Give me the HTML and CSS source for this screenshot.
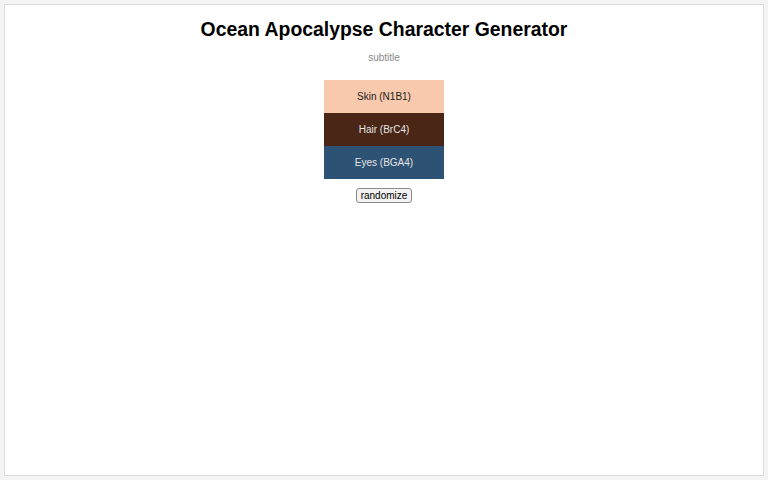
FILE: index.html
```html
<!DOCTYPE html>
<html>

<head>
  <meta charset="UTF-8">
  <title>Ocean Apocalypse Character Generator</title>
  <link rel="stylesheet" href="styles.css">
</head>

<body>

  <div id="page">
    <h1 id="title">Ocean Apocalypse Character Generator</h1>
    <div id="subtitle">subtitle</div>

    <div id="swatches">
      <div class="swatch skin">Skin (N1B1)</div>
      <div class="swatch hair">Hair (BrC4)</div>
      <div class="swatch eyes">Eyes (BGA4)</div>
    </div>

    <button id="randomize-btn">randomize</button>
  </div>

</body>

</html>
```

FILE: styles.css
```css
html, body {
  height: 100%;
}

body {
  margin: 0;
  padding: 4px;
  box-sizing: border-box;
  background-color: #f4f4f4;
  font-family: 'Liberation Sans', Arial, sans-serif;
}

#page {
  height: 100%;
  box-sizing: border-box;
  background-color: #fff;
  border: 1px solid #dcdcdc;
  text-align: center;
  padding-top: 12px;
}

#title {
  margin: 0;
  font-size: 19.4px;
  font-weight: bold;
  color: #000;
  line-height: 24px;
}

#subtitle {
  margin-top: 11px;
  font-size: 10px;
  color: #888;
  line-height: 12px;
}

#swatches {
  width: 120px;
  margin: 16px auto 0 auto;
}

.swatch {
  height: 33px;
  line-height: 33px;
  font-size: 10px;
}

.swatch.skin {
  background-color: #f8c9ac;
  color: #222;
}

.swatch.hair {
  background-color: #4a2616;
  color: #e4e4e4;
}

.swatch.eyes {
  background-color: #2d5274;
  color: #e4e4e4;
}

#randomize-btn {
  margin-top: 9px;
  font-family: 'Liberation Sans', Arial, sans-serif;
  font-size: 10px;
  padding: 1px 4px;
  background-color: #f2f2f2;
  border: 1px solid #8a8a8a;
  border-radius: 3px;
  color: #000;
}
```
